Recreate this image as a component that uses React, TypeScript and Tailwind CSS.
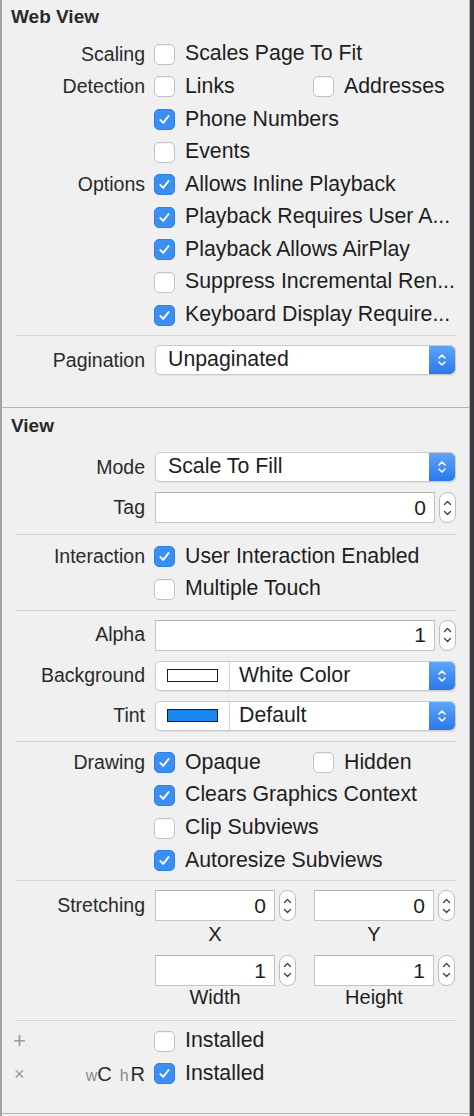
import React from "react";

const FONT = { fontFamily: '"Liberation Sans", Arial, sans-serif' };

const Check = ({ checked }: { checked?: boolean }) =>
  checked ? (
    <div className="w-[21px] h-[21px] rounded-[5px] bg-[#3b8ef3] border border-[#2f7fe6] flex items-center justify-center shrink-0">
      <svg width="13" height="13" viewBox="0 0 13 13">
        <path d="M2.3 6.9 L5.2 9.8 L10.6 3" fill="none" stroke="white" strokeWidth="1.9" strokeLinecap="round" strokeLinejoin="round" />
      </svg>
    </div>
  ) : (
    <div className="w-[21px] h-[21px] rounded-[5px] bg-white border border-[#c2c2c2] shadow-[inset_0_1px_0_rgba(0,0,0,0.04)] shrink-0" />
  );

const CheckItem = ({ checked, text, width }: { checked?: boolean; text: string; width?: string }) => (
  <div className={`flex items-center gap-[10px] ${width ?? ""}`}>
    <Check checked={checked} />
    <span className="whitespace-nowrap text-[21.3px] text-[#1e1e1e]">{text}</span>
  </div>
);

const Row = ({ label, children }: { label?: React.ReactNode; children?: React.ReactNode }) => (
  <div className="flex items-center h-[32.6px]">
    <div className="w-[143px] text-right text-[#2a2a2a] whitespace-nowrap">{label}</div>
    <div className="ml-[9px] flex items-center">{children}</div>
  </div>
);

const Sep = () => <div className="h-px bg-[#d2d2d2] ml-[14px] mr-[13px]" />;

const BlueCap = () => (
  <div className="w-[26px] self-stretch rounded-r-[5px] bg-gradient-to-b from-[#5ea4f8] to-[#2878ee] flex items-center justify-center">
    <svg width="10" height="16" viewBox="0 0 10 16">
      <path d="M2 6 L5 3 L8 6 M2 10 L5 13 L8 10" fill="none" stroke="white" strokeWidth="1.6" strokeLinecap="round" strokeLinejoin="round" />
    </svg>
  </div>
);

const Stepper = () => (
  <div className="w-[17px] h-[31px] rounded-[8px] bg-white border border-[#bdbdbd] flex items-center justify-center shrink-0">
    <svg width="9" height="20" viewBox="0 0 9 20">
      <path d="M1.5 6.5 L4.5 3.5 L7.5 6.5 M1.5 13.5 L4.5 16.5 L7.5 13.5" fill="none" stroke="#3c3c3c" strokeWidth="1.3" strokeLinecap="round" strokeLinejoin="round" />
    </svg>
  </div>
);

const NumField = ({ value, width }: { value: string; width: string }) => (
  <div className="flex items-center gap-[4px]">
    <div className={`${width} h-[31px] bg-white border border-[#c4c4c4] border-t-[#b4b4b4] flex items-center justify-end pr-[8px] text-[21px] text-[#1e1e1e]`}>
      {value}
    </div>
    <Stepper />
  </div>
);

const Popup = ({ children }: { children: React.ReactNode }) => (
  <div className="w-[301px] h-[30px] bg-white rounded-[5px] border border-[#cacaca] shadow-[0_1px_0_rgba(0,0,0,0.06)] flex items-stretch text-[21.3px] text-[#1e1e1e]">
    <div className="flex-1 flex items-center">{children}</div>
    <BlueCap />
  </div>
);

const ColorPopup = ({ swatch, text }: { swatch: string; text: string }) => (
  <Popup>
    <div className="w-[74px] h-full flex items-center justify-center border-r border-[#d6d6d6]">
      <div className={`w-[51px] h-[13px] border-[1.5px] border-[#1a1a1a] ${swatch}`} />
    </div>
    <span className="pl-[9px]">{text}</span>
  </Popup>
);

export default function App() {
  return (
    <div style={FONT} className="w-[474px] h-[1116px] flex bg-[#3d3a42] text-[19.5px] text-[#222] overflow-hidden">
      <div className="w-[2px] bg-[#a4a4a4]" />
      <div className="w-[467px] bg-[#f0f0f0] flex flex-col">
        {/* Web View */}
        <div className="h-[38px] pt-[7px] pl-[9px] font-bold text-[19px] leading-[20px] text-[#2a2a2a]">Web View</div>
        <Row label="Scaling"><CheckItem text="Scales Page To Fit" /></Row>
        <Row label="Detection">
          <CheckItem text="Links" width="w-[159px]" />
          <CheckItem text="Addresses" />
        </Row>
        <Row><CheckItem checked text="Phone Numbers" /></Row>
        <Row><CheckItem text="Events" /></Row>
        <Row label="Options"><CheckItem checked text="Allows Inline Playback" /></Row>
        <Row><CheckItem checked text="Playback Requires User A..." /></Row>
        <Row><CheckItem checked text="Playback Allows AirPlay" /></Row>
        <Row><CheckItem text="Suppress Incremental Ren..." /></Row>
        <Row><CheckItem checked text="Keyboard Display Require..." /></Row>
        <div className="h-[4px]" />
        <Sep />
        <div className="mt-[8px] flex items-center h-[32px]">
          <div className="w-[143px] text-right text-[#2a2a2a]">Pagination</div>
          <div className="ml-[10px]">
            <Popup><span className="pl-[12px]">Unpaginated</span></Popup>
          </div>
        </div>
        <div className="h-[31px]" />
        <div className="h-px bg-[#b4b4b4]" />

        {/* View */}
        <div className="h-[44px] pt-[8px] pl-[9px] font-bold text-[19px] leading-[20px] text-[#2a2a2a]">View</div>
        <div className="flex items-center h-[30px]">
          <div className="w-[143px] text-right text-[#2a2a2a]">Mode</div>
          <div className="ml-[10px]">
            <Popup><span className="pl-[12px]">Scale To Fill</span></Popup>
          </div>
        </div>
        <div className="mt-[10px] flex items-center h-[31px]">
          <div className="w-[143px] text-right text-[#2a2a2a]">Tag</div>
          <div className="ml-[10px]"><NumField value="0" width="w-[280px]" /></div>
        </div>
        <div className="h-[11px]" />
        <Sep />
        <div className="h-[5px]" />
        <Row label="Interaction"><CheckItem checked text="User Interaction Enabled" /></Row>
        <Row><CheckItem text="Multiple Touch" /></Row>
        <div className="h-[4px]" />
        <Sep />
        <div className="mt-[9px] flex items-center h-[31px]">
          <div className="w-[143px] text-right text-[#2a2a2a]">Alpha</div>
          <div className="ml-[10px]"><NumField value="1" width="w-[280px]" /></div>
        </div>
        <div className="mt-[10px] flex items-center h-[30px]">
          <div className="w-[143px] text-right text-[#2a2a2a]">Background</div>
          <div className="ml-[10px]"><ColorPopup swatch="bg-white" text="White Color" /></div>
        </div>
        <div className="mt-[10px] flex items-center h-[30px]">
          <div className="w-[143px] text-right text-[#2a2a2a]">Tint</div>
          <div className="ml-[10px]"><ColorPopup swatch="bg-[#1a86f0]" text="Default" /></div>
        </div>
        <div className="h-[10px]" />
        <Sep />
        <div className="h-[5px]" />
        <Row label="Drawing">
          <CheckItem checked text="Opaque" width="w-[159px]" />
          <CheckItem text="Hidden" />
        </Row>
        <Row><CheckItem checked text="Clears Graphics Context" /></Row>
        <Row><CheckItem text="Clip Subviews" /></Row>
        <Row><CheckItem checked text="Autoresize Subviews" /></Row>
        <div className="h-[3px]" />
        <Sep />
        <div className="mt-[9px] flex items-center h-[32px]">
          <div className="w-[143px] text-right text-[#2a2a2a]">Stretching</div>
          <div className="ml-[10px] flex gap-[18px]">
            <NumField value="0" width="w-[120px]" />
            <NumField value="0" width="w-[120px]" />
          </div>
        </div>
        <div className="flex h-[25px] items-center text-[20px] text-[#1e1e1e]">
          <div className="ml-[153px] w-[120px] text-center">X</div>
          <div className="ml-[39px] w-[120px] text-center">Y</div>
        </div>
        <div className="mt-[8px] flex items-center h-[31px]">
          <div className="w-[143px]" />
          <div className="ml-[10px] flex gap-[18px]">
            <NumField value="1" width="w-[120px]" />
            <NumField value="1" width="w-[120px]" />
          </div>
        </div>
        <div className="flex h-[22px] items-center text-[20px] text-[#1e1e1e]">
          <div className="ml-[153px] w-[120px] text-center">Width</div>
          <div className="ml-[39px] w-[120px] text-center">Height</div>
        </div>
        <div className="h-[12px]" />
        <Sep />
        <div className="h-[4px]" />
        <div className="flex items-center h-[32.6px]">
          <div className="w-[143px] flex items-center">
            <span className="ml-[11px] text-[#9a9a9a] text-[22px] font-light leading-none">+</span>
          </div>
          <div className="ml-[9px]"><CheckItem text="Installed" /></div>
        </div>
        <div className="flex items-center h-[32.6px]">
          <div className="w-[143px] flex items-center">
            <span className="ml-[12px] text-[#9a9a9a] text-[18px] leading-none">×</span>
            <span className="ml-auto flex items-baseline">
              <span className="text-[16px] text-[#8a8a8a]">w</span>
              <span className="text-[20px] text-[#2a2a2a]">C</span>
              <span className="ml-[8px] text-[16px] text-[#8a8a8a]">h</span>
              <span className="ml-[2px] text-[20px] text-[#2a2a2a]">R</span>
            </span>
          </div>
          <div className="ml-[9px]"><CheckItem checked text="Installed" /></div>
        </div>
        <div className="flex-1" />
        <div className="h-px bg-[#b4b4b4] mb-[2px]" />
      </div>
      <div className="w-px bg-[#b8b8b8]" />
      <div className="flex-1 bg-[#3d3a42]" />
    </div>
  );
}
